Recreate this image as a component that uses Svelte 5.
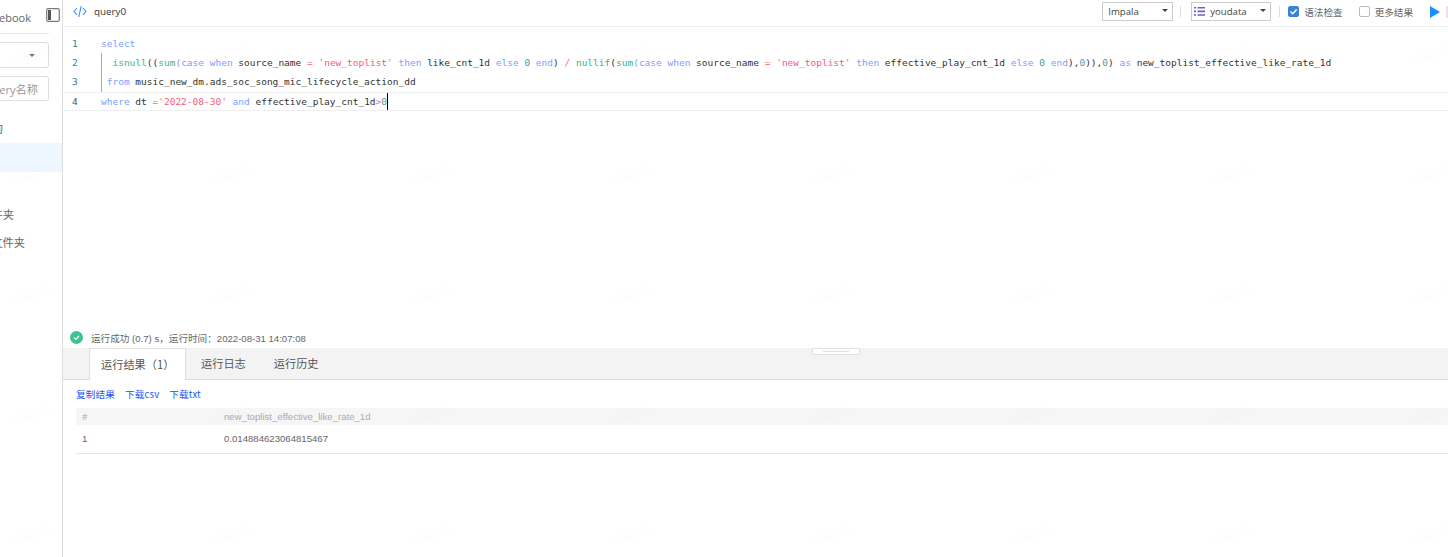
<script>
  const marks = [];
  for (let r = 0; r < 5; r++) for (let c = 0; c < 8; c++) marks.push(`${r}-${c}`);
  const k = 'k', t = '', s = 's', n = 'n', f = 'f', o = 'o';
  const lines = [
    [[k, 'select']],
    [[t, '  '], [f, 'isnull'], [t, '(('], [f, 'sum'], [k, '('], [k, 'case when'], [t, ' source_name '], [o, '='], [s, " 'new_toplist'"], [k, ' then'], [t, ' like_cnt_1d '], [k, 'else'], [n, ' 0'], [k, ' end'], [t, ') '], [o, '/'], [f, ' nullif'], [t, '('], [f, 'sum'], [k, '('], [k, 'case when'], [t, ' source_name '], [o, '='], [s, " 'new_toplist'"], [k, ' then'], [t, ' effective_play_cnt_1d '], [k, 'else'], [n, ' 0'], [k, ' end'], [t, '),'], [n, '0'], [t, ')),'], [n, '0'], [t, ') '], [k, 'as'], [t, ' new_toplist_effective_like_rate_1d']],
    [[t, ' '], [k, 'from'], [t, ' music_new_dm.ads_soc_song_mic_lifecycle_action_dd']],
    [[k, 'where'], [t, ' dt '], [o, '='], [s, "'2022-08-30'"], [k, ' and'], [t, ' effective_play_cnt_1d'], [o, '>'], [n, '0']]
  ];
</script>

<div class="app">
  <aside class="side">
    <div class="side-head">
      <span class="clip">Notebook</span>
      <svg class="toggle" width="14" height="14" viewBox="0 0 14 14"><rect x=".7" y=".7" width="12.6" height="12.6" rx="1.6" fill="#fff" stroke="#777" stroke-width="1.2"/><rect x="2" y="2" width="3" height="10" fill="#555"/></svg>
    </div>
    <div class="box sel"><i class="caret"></i></div>
    <div class="box search"><span class="clip ph">输入query名称</span></div>
    <div class="item first"><span class="clip end3">查询</span></div>
    <div class="item active"></div>
    <div class="item folder-a"><span class="clip end14">文件夹</span></div>
    <div class="item folder-b"><span class="clip end25">文件夹</span></div>
  </aside>

  <main class="main">
    <header class="bar">
      <svg class="code" width="14" height="13" viewBox="0 0 14 13" fill="none" stroke="#3d8bf0" stroke-width="1.1"><path d="M4 3 1 6.5 4 10M10 3l3 3.5L10 10M8.2 1 5.8 12"/></svg>
      <span class="qname">query0</span>
      <div class="tools">
        <div class="dd impala"><span>Impala</span><i class="caret"></i></div>
        <b class="div"></b>
        <div class="dd you">
          <svg width="11" height="9" viewBox="0 0 11 9" fill="#6a62c4"><path d="M0 0h2v1.6H0zM3.500 0H11v1.600H3.500zM0 3.600h2v1.600H0zM3.500 3.600H11v1.600H3.500zM0 7.200h2v1.600H0zM3.500 7.200H11v1.600H3.500z"/></svg>
          <span>youdata</span><i class="caret"></i>
        </div>
        <b class="div"></b>
        <label class="chk"><span class="cb on"><svg width="11" height="11" viewBox="0 0 11 11" fill="none" stroke="#fff" stroke-width="1.500"><path d="m2.500 5.500 2.200 2.200 4-4.200"/></svg></span>语法检查</label>
        <label class="chk two"><span class="cb"></span>更多结果</label>
        <svg class="play" width="10" height="12" viewBox="0 0 10 12"><path d="M0 0 10 6 0 12z" fill="#1890ff"/></svg>
        <i class="pink"></i>
      </div>
    </header>

    <section class="editor">
      <i class="guide"></i>
      {#each lines as line, i}
        <div class="ln" class:cur={i === 3}>
          <span class="num">{i + 1}</span>
          <span class="src">{#each line as tok}<span class={tok[0]}>{tok[1]}</span>{/each}{#if i === 3}<i class="cursor"></i>{/if}</span>
        </div>
      {/each}
    </section>

    <div class="status">
      <svg width="13" height="13" viewBox="0 0 13 13"><circle cx="6.500" cy="6.500" r="6.500" fill="#3cc48f"/><path d="m4 6.700 1.800 1.700L9 5" fill="none" stroke="#fff" stroke-width="1.200"/></svg>
      <span>运行成功 (0.7) s，运行时间：2022-08-31 14:07:08</span>
    </div>

    <nav class="tabs">
      <span class="handle"><i></i></span>
      <span class="tab on">运行结果（1）</span>
      <span class="tab">运行日志</span>
      <span class="tab">运行历史</span>
    </nav>

    <div class="actions"><a href="#a">复制结果</a><a href="#b">下载csv</a><a href="#c">下载txt</a></div>

    <div class="table">
      <div class="row head"><span>#</span><span>new_toplist_effective_like_rate_1d</span></div>
      <div class="row body"><span>1</span><span>0.014884623064815467</span></div>
    </div>
  </main>

  <div class="marks" aria-hidden="true">
    {#each marks as m (m)}<span>liusiwei</span>{/each}
  </div>
</div>

<style>
  :global(body) { margin: 0; background: #fff; }
  .app {
    position: relative; display: flex; width: 1448px; height: 557px; overflow: hidden;
    font-family: "Liberation Sans", "Noto Sans CJK SC", sans-serif; font-size: 9.6px; color: #555; background: #fff;
  }
  .side { flex: 0 0 63px; box-sizing: border-box; border-right: 1px solid #ddd; position: relative; overflow: hidden; }
  .clip { white-space: nowrap; }
  .side-head { height: 33px; width: 49px; border-bottom: 1px solid #e8e8e8; display: flex; justify-content: flex-end; box-sizing: content-box; }
  .side-head .clip { font-family: "Open Sans", "Noto Sans CJK SC", sans-serif; font-size: 11px; color: #666; margin: 10px 18px 0 0; line-height: 16px; }
  .toggle { position: absolute; left: 46px; top: 8px; }
  .box { box-sizing: border-box; width: 60px; margin-left: -11px; border: 1px solid #ddd; border-radius: 3px; display: flex; align-items: center; justify-content: flex-end; }
  .sel { height: 26px; margin-top: 8px; padding-right: 13px; }
  .sel .caret { border-width: 3.500px 3.500px 0; border-top-color: #777; }
  .search { height: 25px; margin-top: 8px; padding-right: 10px; }
  .ph { font-family: "Open Sans", "Noto Sans CJK SC", sans-serif; font-size: 11.200px; color: #999; }
  .caret { display: block; width: 0; height: 0; border: 3px solid transparent; border-top: 3.500px solid #444; border-bottom: 0; }
  .item { display: flex; justify-content: flex-end; align-items: center; font-size: 11.200px; color: #666; font-family: "Noto Sans CJK SC", sans-serif; }
  .first { height: 18px; width: 3px; margin-top: 18px; }
  .active { height: 29px; margin-top: 6px; background: #eef7ff; }
  .folder-a { height: 18px; width: 14px; margin-top: 33px; }
  .folder-b { height: 18px; width: 25px; margin-top: 10px; }

  .main { flex: 1; min-width: 0; display: flex; flex-direction: column; }
  .bar { flex: none; border-bottom: 1px solid #eee; display: flex; align-items: center; padding: 0 0 3px 10px; box-sizing: content-box; height: 23px; }
  .qname { margin-left: 7px; font-family: "Open Sans", sans-serif; font-size: 9.800px; color: #333; }
  .tools { margin-left: auto; display: flex; align-items: center; }
  .dd { box-sizing: border-box; height: 19px; border: 1px solid #ccc; display: flex; align-items: center; font-family: "Open Sans", sans-serif; font-size: 9.600px; color: #444; padding: 0 4px 0 5px; }
  .dd .caret { margin-left: auto; margin-bottom: 2px; }
  .impala { width: 71px; }
  .you { width: 80px; gap: 5px; padding-left: 2px; }
  .div { width: 1px; height: 11px; background: #ddd; margin: 0 10px 0 7px; }
  .you + .div { margin: 0 8px 0 8px; }
  .chk { display: flex; align-items: center; gap: 5px; font-family: "Noto Sans CJK SC", sans-serif; font-size: 9.600px; color: #666; }
  .two { margin-left: 16px; }
  .cb { box-sizing: border-box; width: 11px; height: 11px; border: 1px solid #bbb; border-radius: 2px; display: block; background: #fff; }
  .cb.on { background: #3a84d8; border-color: #3a84d8; }
  .cb.on svg { display: block; margin: -1px; }
  .play { margin-left: 17px; }
  .pink { width: 2px; height: 12px; margin-left: 6px; background: #f3dcf0; }

  .editor { flex: 1; position: relative; padding-top: 7px; font-family: "DejaVu Sans Mono", "Liberation Mono", monospace; font-size: 9.500px; color: #333; }
  .guide { position: absolute; left: 38px; top: 26px; width: 1px; height: 39px; background: #aaa; }
  .ln { display: flex; height: 19px; line-height: 19px; white-space: pre; }
  .ln.cur { height: 17px; line-height: 17px; margin-top: 1px; border-top: 1px solid #eee; border-bottom: 1px solid #eee; }
  .num { flex: 0 0 36px; box-sizing: border-box; padding-left: 9px; color: #2f7f92; }
  .cur .num { color: #555; }
  .src { position: relative; margin-left: 2px; }
  .k { color: #7d9eff; }
  .f { color: #37b38c; }
  .s { color: #f0607c; }
  .n { color: #4c9aa0; }
  .o { color: #ee6a78; }
  .cursor { display: inline-block; width: 1px; height: 17px; background: #000; vertical-align: top; }

  .status { height: 21px; flex: none; display: flex; align-items: center; gap: 8px; padding-left: 7px; color: #666; box-sizing: border-box; }
  .tabs { position: relative; height: 32px; flex: none; box-sizing: border-box; background: #f3f3f3; border-bottom: 1px solid #ddd; display: flex; padding-left: 26px; font-family: "Noto Sans CJK SC", sans-serif; font-size: 11.200px; color: #555; }
  .tab { padding: 0 14px; line-height: 31px; }
  .tab.on { background: #fff; border: 1px solid #ddd; border-width: 1px 1px 0; height: 32px; width: 97px; box-sizing: border-box; margin-right: 1px; white-space: nowrap; padding: 0 11px; }
  .handle { position: absolute; left: 749px; top: 0; width: 48px; height: 7px; box-sizing: border-box; border: 1px solid #e0e0e0; background: #fff; display: flex; align-items: center; justify-content: center; }
  .handle i { display: block; width: 26px; height: 1px; background: #e0e0e0; }
  .actions { height: 28px; flex: none; padding-left: 13px; display: flex; align-items: center; gap: 10px; }
  .actions a { color: #1a55f0; text-decoration: none; font-family: "Noto Sans CJK SC", sans-serif; font-size: 9.600px; letter-spacing: .15px; }
  .table { flex: none; margin-left: 13px; height: 149px; font-size: 9.600px; }
  .row { display: grid; grid-template-columns: 142px 1fr; padding-left: 6px; height: 28px; align-items: center; border-bottom: 1px solid #e3e6ec; color: #666; }
  .row.body { box-sizing: content-box; height: 26px; padding-bottom: 2px; }
  .row.head { height: 17px; background: #f6f6f6; border: 0; color: #aaa; }

  .marks { position: absolute; left: -70px; top: -7px; display: grid; grid-template-columns: repeat(8, 200px); grid-auto-rows: 120px; pointer-events: none; }
  .marks span { display: flex; align-items: center; justify-content: center; transform: rotate(-17deg); font-family: "Open Sans", sans-serif; font-size: 14px; color: rgba(0, 0, 0, .035); }
</style>
